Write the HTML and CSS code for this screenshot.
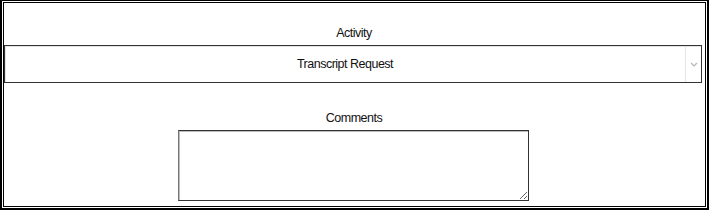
FILE: index.html
```html
<!DOCTYPE html>
<html>
<head>
<meta charset="utf-8">
<link rel="stylesheet" href="styles.css">
</head>
<body>
<div class="frame">
  <div class="panel">
    <div class="field">
      <label class="label" for="activity">Activity</label>
      <div class="select-wrap">
        <select id="activity" class="select">
          <option>Transcript Request</option>
        </select>
        <span class="arrow">
          <svg width="8" height="5" viewBox="0 0 8 5"><path d="M1 1 L4 4 L7 1" fill="none" stroke="#b5b5b5" stroke-width="1.2"/></svg>
        </span>
      </div>
    </div>
    <div class="field comments">
      <label class="label" for="comments">Comments</label>
      <textarea id="comments" class="textarea"></textarea>
    </div>
  </div>
</div>
</body>
</html>
```

FILE: styles.css
```css
html, body {
  margin: 0;
  padding: 0;
  background: #fff;
}
body {
  font-family: "Liberation Sans", Arial, sans-serif;
  font-size: 12.5px;
  letter-spacing: -0.5px;
  color: #111;
}
.frame {
  width: 709px;
  height: 210px;
  box-sizing: border-box;
  border: 2px solid #000;
  border-top-width: 1px;
  padding: 1px;
}
.panel {
  height: 100%;
  box-sizing: border-box;
  border: 1px solid #000;
  display: flex;
  flex-direction: column;
  align-items: center;
  padding: 0 1px 0 0;
}
.field {
  display: flex;
  flex-direction: column;
  align-items: center;
  width: 100%;
}
.label {
  display: block;
  line-height: 15px;
  margin-top: 23px;
  margin-bottom: 4px;
}
.select-wrap {
  position: relative;
  width: 698px;
  align-self: flex-start;
}
.select {
  appearance: none;
  -webkit-appearance: none;
  display: block;
  width: 100%;
  height: 38px;
  box-sizing: border-box;
  border: 1px solid #333;
  box-shadow: inset 1px 1px 0 #e4e4e4;
  border-radius: 0;
  background: #fff;
  font-family: inherit;
  font-size: 12.5px;
  letter-spacing: -0.5px;
  color: #111;
  text-align: center;
  text-align-last: center;
  padding: 0 16px 0 0;
  outline: none;
}
.arrow {
  position: absolute;
  top: 1px;
  right: 1px;
  bottom: 1px;
  width: 15px;
  border-left: 1px solid #e6e6e6;
  display: flex;
  align-items: center;
  justify-content: center;
  pointer-events: none;
}
.comments .label {
  margin-top: 28px;
}
.textarea {
  display: block;
  width: 351px;
  height: 71px;
  box-sizing: border-box;
  border: 1px solid #333;
  border-left-color: #777;
  box-shadow: inset 1px 1px 0 #bbb;
  border-radius: 0;
  resize: both;
  margin: 0 2px 0 0;
  padding: 2px;
  font-family: inherit;
  font-size: 12px;
}
```
